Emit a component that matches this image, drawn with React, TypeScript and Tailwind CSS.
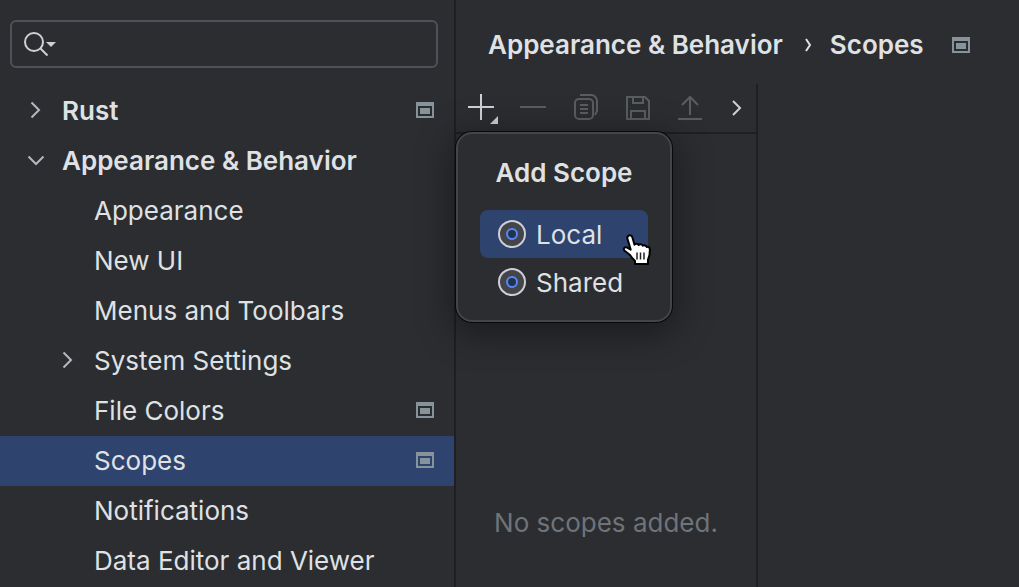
import { useState } from "react";

type TreeNode = {
  label: string;
  level: 0 | 1;
  arrow?: "right" | "down";
  perProject?: boolean;
};

const nodes: TreeNode[] = [
  { label: "Rust", level: 0, arrow: "right", perProject: true },
  { label: "Appearance & Behavior", level: 0, arrow: "down" },
  { label: "Appearance", level: 1 },
  { label: "New UI", level: 1 },
  { label: "Menus and Toolbars", level: 1 },
  { label: "System Settings", level: 1, arrow: "right" },
  { label: "File Colors", level: 1, perProject: true },
  { label: "Scopes", level: 1, perProject: true },
  { label: "Notifications", level: 1 },
  { label: "Data Editor and Viewer", level: 1 },
];

const ProjectIcon = () => (
  <svg width="18" height="18" viewBox="0 0 18 18" className="shrink-0" fill="#87939A" aria-hidden="true">
    <path fillRule="evenodd" d="M0 0h18v16H0zM2 4v10h14V4z" />
    <path d="M4 6h10v6H4z" />
  </svg>
);

const TreeArrow = ({ direction }: { direction?: "right" | "down" }) => (
  <svg width="32" height="32" viewBox="0 0 32 32" className="shrink-0" fill="none" stroke="#B4B8BF" strokeWidth="2" aria-hidden="true">
    {direction === "right" && <path d="M11.5 7.5 19 15l-7.500 7.500" />}
    {direction === "down" && <path d="M8.500 11.500 16 19l7.500-7.500" />}
  </svg>
);

const ScopeIcon = () => (
  <svg width="28" height="28" viewBox="0 0 28 28" className="shrink-0" fill="none" aria-hidden="true">
    <circle cx="14" cy="14" r="13" fill="#43454A" stroke="#CED0D6" strokeWidth="2" />
    <circle cx="14" cy="14" r="5" fill="#25324D" stroke="#548AF7" strokeWidth="2" />
  </svg>
);

const SettingsTree = ({ selected, onSelect }: { selected: string; onSelect: (label: string) => void }) => (
  <nav aria-label="Settings" className="mt-[18px]">
    <ul>
      {nodes.map((node) => (
        <li key={node.label}>
          <button
            type="button"
            onClick={() => onSelect(node.label)}
            className={`flex h-[50px] w-full items-center gap-[10px] pr-5 text-left ${
              node.level === 0 ? "pl-5 font-semibold" : "pl-[52px]"
            } ${selected === node.label ? "bg-[#2E436E]" : ""}`}
          >
            <TreeArrow direction={node.arrow} />
            <span className="flex-1 whitespace-nowrap">{node.label}</span>
            {node.perProject && <ProjectIcon />}
          </button>
        </li>
      ))}
    </ul>
  </nav>
);

const toolbarActions = [
  {
    name: "Remove",
    drawing: <path d="M3 15h26" />,
  },
  {
    name: "Copy",
    drawing: (
      <>
        <rect x="6" y="7" width="18" height="20" rx="4" />
        <path d="M11 3h11a6 6 0 0 1 6 6v10l-2 4M11 13h8M11 17h8M11 21h8" />
      </>
    ),
  },
  {
    name: "Save",
    drawing: <path d="M6 5h18l4 4v18H6zM12 5v6h10V5M10 27v-8h14v8" />,
  },
  {
    name: "Share",
    drawing: <path d="M5 27h24M17 23V5M9 13l8-8 8 8" />,
  },
];

const Toolbar = () => (
  <div role="toolbar" aria-label="Scopes" className="flex h-[50px] items-center gap-5 border-b-2 border-[#1E1F22] pl-[9px]">
    <button type="button" aria-label="Add" className="shrink-0">
      <svg width="32" height="32" viewBox="0 0 32 32" className="overflow-visible" fill="none" stroke="#CED0D6" strokeWidth="2">
        <path d="M3 15h26M16 2v26" />
        <path d="M33 24v8h-8z" fill="#CED0D6" stroke="none" />
      </svg>
    </button>
    {toolbarActions.map((action) => (
      <button key={action.name} type="button" aria-label={action.name} disabled className="shrink-0">
        <svg width="32" height="32" viewBox="0 0 32 32" fill="none" stroke="#5A5D60" strokeWidth="2">
          {action.drawing}
        </svg>
      </button>
    ))}
    <button type="button" aria-label="More" className="shrink-0">
      <svg width="24" height="32" viewBox="0 0 24 32" fill="none" stroke="#CED0D6" strokeWidth="2">
        <path d="M8 9l7 7-7 7" />
      </svg>
    </button>
  </div>
);

const HandCursor = () => (
  <svg
    width="30"
    height="34"
    viewBox="0 0 30 34"
    className="pointer-events-none absolute top-[100px] left-[164px] z-10"
    aria-hidden="true"
  >
    <path
      d="M7 1.500c1.800-.6 3 .5 3.500 2.200l2 7c1-1.200 3.300-1.200 4.200.2 1.300-1 3.400-.7 4.200.8 1.300-.8 3.300-.3 3.800 1.300 1.800-.5 3.300.6 3.200 2.500l-.4 5.500-1.500 4.500v4.500H13v-3c-1.500-1.500-3.500-3.500-5-6L2.300 16.500c-1.300-1.800.2-3.800 2.400-3.100l4 2.200L5.500 5c-.5-1.500.1-3 1.500-3.500z"
      fill="#fff"
      stroke="#000"
      strokeWidth="2"
      strokeLinejoin="round"
    />
    <path d="M15 18.500v7M18.500 18.500v7M22 18.500v7" stroke="#222" strokeWidth="1.500" />
  </svg>
);

const AddScopePopup = () => (
  <div
    role="menu"
    aria-label="Add Scope"
    className="absolute top-[48px] left-0 w-[216px] rounded-2xl border-2 border-[#43454A] bg-[#2B2D30] px-[22px] pb-[14px] shadow-[0_0_0_1px_#08090a,0_8px_36px_4px_rgba(0,0,0,0.4)]"
  >
    <h2 className="flex h-[76px] items-center justify-center pt-0.5 font-semibold whitespace-nowrap">Add Scope</h2>
    <button type="button" role="menuitem" className="flex h-12 w-full items-center gap-[10px] rounded-lg bg-[#2E436E] pl-[18px]">
      <ScopeIcon />
      <span className="pt-0.5">Local</span>
    </button>
    <button type="button" role="menuitem" className="flex h-12 w-full items-center gap-[10px] rounded-lg pl-[18px]">
      <ScopeIcon />
      <span className="pt-0.5">Shared</span>
    </button>
    <HandCursor />
  </div>
);

const App = () => {
  const [selected, setSelected] = useState("Scopes");
  const [query, setQuery] = useState("");

  return (
    <div className="flex h-screen overflow-hidden bg-[#2B2D30] font-['Inter',sans-serif] text-[26px] leading-8 text-[#DFE1E5]">
      {/* Sidebar */}
      <aside className="w-[456px] shrink-0 border-r-2 border-[#1E1F22] pt-5">
        <label className="mr-4 ml-[10px] flex h-12 items-center rounded-md border-2 border-[#4E5157] pl-[10px]">
          <svg width="34" height="32" viewBox="0 0 34 32" className="shrink-0" fill="none" stroke="#CED0D6" strokeWidth="2" aria-hidden="true">
            <circle cx="12" cy="14" r="9" />
            <path d="M18.500 20.500 25.500 27.500" />
            <path d="M24 14h10l-5 5z" fill="#CED0D6" stroke="none" />
          </svg>
          <input
            type="text"
            aria-label="Search settings"
            value={query}
            onChange={(e) => setQuery(e.target.value)}
            className="min-w-0 flex-1 bg-transparent px-2 outline-none"
          />
        </label>
        <SettingsTree selected={selected} onSelect={setSelected} />
      </aside>

      {/* Page */}
      <main className="flex min-w-0 flex-1 flex-col">
        <header className="flex h-[84px] shrink-0 items-center pt-[6px] pl-8 font-semibold whitespace-nowrap">
          <a href="#appearance">Appearance & Behavior</a>
          <svg width="10" height="16" viewBox="0 0 10 16" className="mx-5 mr-[17px]" fill="none" stroke="#DFE1E5" strokeWidth="2" aria-hidden="true">
            <path d="M3 2l4 6-4 6" />
          </svg>
          <h1 className="mr-7">{selected}</h1>
          <div className="pt-0.5">
            <ProjectIcon />
          </div>
        </header>
        <div className="flex min-h-0 flex-1">
          <section className="relative w-[302px] border-r-2 border-[#1E1F22]">
            <Toolbar />
            <p className="pt-[373px] text-center text-[#6F737A]">No scopes added.</p>
            <AddScopePopup />
          </section>
        </div>
      </main>
    </div>
  );
};

export default App;
